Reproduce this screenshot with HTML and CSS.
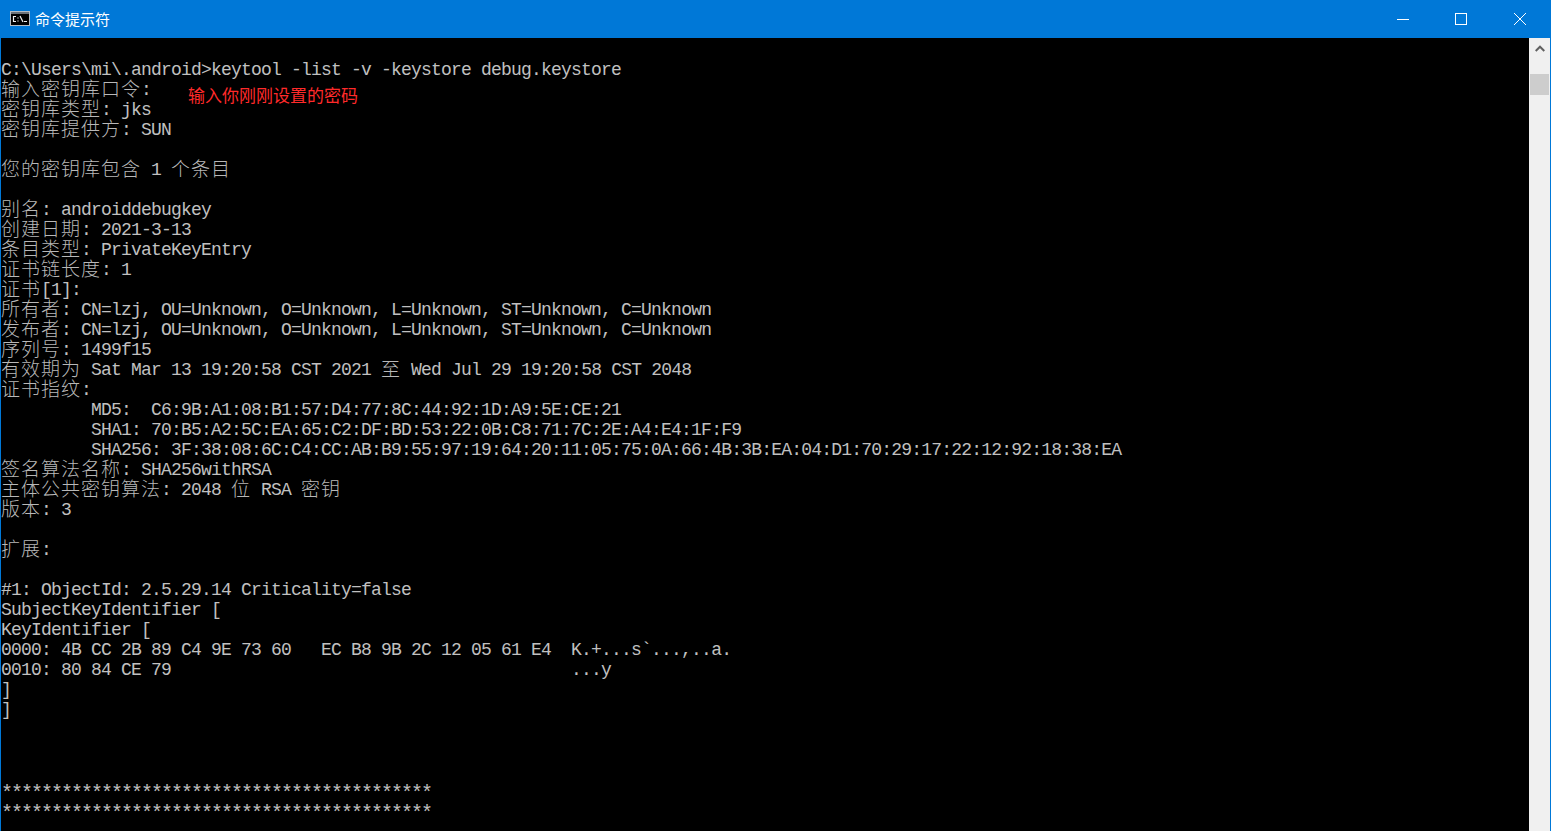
FILE: index.html
```html
<!DOCTYPE html>
<html lang="zh">
<head>
<meta charset="utf-8">
<title>命令提示符</title>
<link rel="stylesheet" href="styles.css">
</head>
<body>
<div class="window">
  <header class="titlebar">
    <svg class="app-icon" width="20" height="15" viewBox="0 0 20 15">
      <rect x="0" y="0" width="20" height="15" fill="#b4bcc4"/>
      <rect x="1" y="1" width="18" height="2" fill="#6c7278"/>
      <rect x="1" y="3" width="18" height="11" fill="#000"/>
      <path d="M6 5.5H3.5V10.5H6M8 6.5V7.5M8 9.5V10.5M10 5L13 11M14 10.5H17" stroke="#f0f0f0" stroke-width="1.2" fill="none"/>
    </svg>
    <span class="title">命令提示符</span>
    <div class="controls">
      <div class="ctl"><svg width="12" height="12" viewBox="0 0 12 12"><path d="M0 6.5H12" stroke="#fff" stroke-width="1"/></svg></div>
      <div class="ctl"><svg width="12" height="12" viewBox="0 0 12 12"><rect x="0.5" y="0.5" width="11" height="11" fill="none" stroke="#fff" stroke-width="1"/></svg></div>
      <div class="ctl"><svg width="12" height="12" viewBox="0 0 12 12"><path d="M0 0L12 12M12 0L0 12" stroke="#fff" stroke-width="1"/></svg></div>
    </div>
  </header>
  <div class="body">
    <main class="console">
      <div class="l">C:\Users\mi\.android&gt;keytool -list -v -keystore debug.keystore</div>
      <div class="l"><span class="c">输入密钥库口令</span>:</div>
      <div class="l"><span class="c">密钥库类型</span>: jks</div>
      <div class="l"><span class="c">密钥库提供方</span>: SUN</div>
      <div class="l"></div>
      <div class="l"><span class="c">您的密钥库包含</span> 1 <span class="c">个条目</span></div>
      <div class="l"></div>
      <div class="l"><span class="c">别名</span>: androiddebugkey</div>
      <div class="l"><span class="c">创建日期</span>: 2021-3-13</div>
      <div class="l"><span class="c">条目类型</span>: PrivateKeyEntry</div>
      <div class="l"><span class="c">证书链长度</span>: 1</div>
      <div class="l"><span class="c">证书</span>[1]:</div>
      <div class="l"><span class="c">所有者</span>: CN=lzj, OU=Unknown, O=Unknown, L=Unknown, ST=Unknown, C=Unknown</div>
      <div class="l"><span class="c">发布者</span>: CN=lzj, OU=Unknown, O=Unknown, L=Unknown, ST=Unknown, C=Unknown</div>
      <div class="l"><span class="c">序列号</span>: 1499f15</div>
      <div class="l"><span class="c">有效期为</span> Sat Mar 13 19:20:58 CST 2021 <span class="c">至</span> Wed Jul 29 19:20:58 CST 2048</div>
      <div class="l"><span class="c">证书指纹</span>:</div>
      <div class="l">         MD5:  C6:9B:A1:08:B1:57:D4:77:8C:44:92:1D:A9:5E:CE:21</div>
      <div class="l">         SHA1: 70:B5:A2:5C:EA:65:C2:DF:BD:53:22:0B:C8:71:7C:2E:A4:E4:1F:F9</div>
      <div class="l">         SHA256: 3F:38:08:6C:C4:CC:AB:B9:55:97:19:64:20:11:05:75:0A:66:4B:3B:EA:04:D1:70:29:17:22:12:92:18:38:EA</div>
      <div class="l"><span class="c">签名算法名称</span>: SHA256withRSA</div>
      <div class="l"><span class="c">主体公共密钥算法</span>: 2048 <span class="c">位</span> RSA <span class="c">密钥</span></div>
      <div class="l"><span class="c">版本</span>: 3</div>
      <div class="l"></div>
      <div class="l"><span class="c">扩展</span>:</div>
      <div class="l"></div>
      <div class="l">#1: ObjectId: 2.5.29.14 Criticality=false</div>
      <div class="l">SubjectKeyIdentifier [</div>
      <div class="l">KeyIdentifier [</div>
      <div class="l">0000: 4B CC 2B 89 C4 9E 73 60   EC B8 9B 2C 12 05 61 E4  K.+...s`...,..a.</div>
      <div class="l">0010: 80 84 CE 79                                        ...y</div>
      <div class="l">]</div>
      <div class="l">]</div>
      <div class="l"></div>
      <div class="l"></div>
      <div class="l"></div>
      <div class="l stars">*******************************************</div>
      <div class="l stars">*******************************************</div>
      <div class="note">输入你刚刚设置的密码</div>
    </main>
    <aside class="scrollbar">
      <svg class="arrow" width="10" height="7" viewBox="0 0 10 7"><path d="M0.7 6L5 1.7L9.3 6" fill="none" stroke="#606060" stroke-width="2"/></svg>
      <div class="thumb"></div>
    </aside>
  </div>
</div>
</body>
</html>
```
FILE: styles.css
```css
* { box-sizing: border-box; }
html, body { margin: 0; padding: 0; height: 100%; overflow: hidden; background: #000; }
.window {
  height: 831px;
  display: flex;
  flex-direction: column;
  border-left: 1px solid #0078d7;
  border-right: 1px solid #0078d7;
  background: #000;
}
.titlebar {
  height: 38px;
  flex: none;
  display: flex;
  align-items: center;
  background: #0078d7;
  color: #fff;
  padding-left: 9px;
}
.app-icon { flex: none; margin-top: -1px; }
.title {
  margin-left: 5px;
  font: 15px/20px "Noto Sans CJK SC", sans-serif;
}
.controls { margin-left: auto; display: flex; height: 100%; padding-right: 1px; }
.ctl {
  width: 58.5px;
  display: flex;
  align-items: center;
  justify-content: center;
}
.ctl svg { display: block; }
.body { flex: 1; min-height: 0; display: flex; }
.console {
  flex: 1;
  min-width: 0;
  position: relative;
  overflow: hidden;
  padding-top: 22px;
  color: #c0c0c0;
  font-family: "Liberation Mono", monospace;
  font-size: 18px;
  letter-spacing: -0.8px;
  line-height: 20px;
}
.l { height: 20px; white-space: pre; }
.stars {
  padding-top: 4px;
  font-size: 20px;
  letter-spacing: -2px;
}
.c {
  display: inline-block;
  height: 20px;
  vertical-align: top;
  font-family: "Noto Sans CJK SC", sans-serif;
  font-size: 19px;
  letter-spacing: 1px;
  line-height: 15px;
  font-weight: 300;
  color: #b8b8b8;
}
.note {
  position: absolute;
  left: 187px;
  top: 45px;
  color: #ff2a2a;
  font: 17px/24px "Noto Sans CJK SC", sans-serif;
  letter-spacing: 0;
  white-space: nowrap;
}
.scrollbar {
  width: 21px;
  flex: none;
  background: #f0f0f0;
  display: flex;
  flex-direction: column;
  align-items: center;
}
.arrow { margin-top: 7px; display: block; flex: none; }
.thumb { width: 19px; height: 21px; margin-top: 22px; background: #cdcdcd; flex: none; }
```
